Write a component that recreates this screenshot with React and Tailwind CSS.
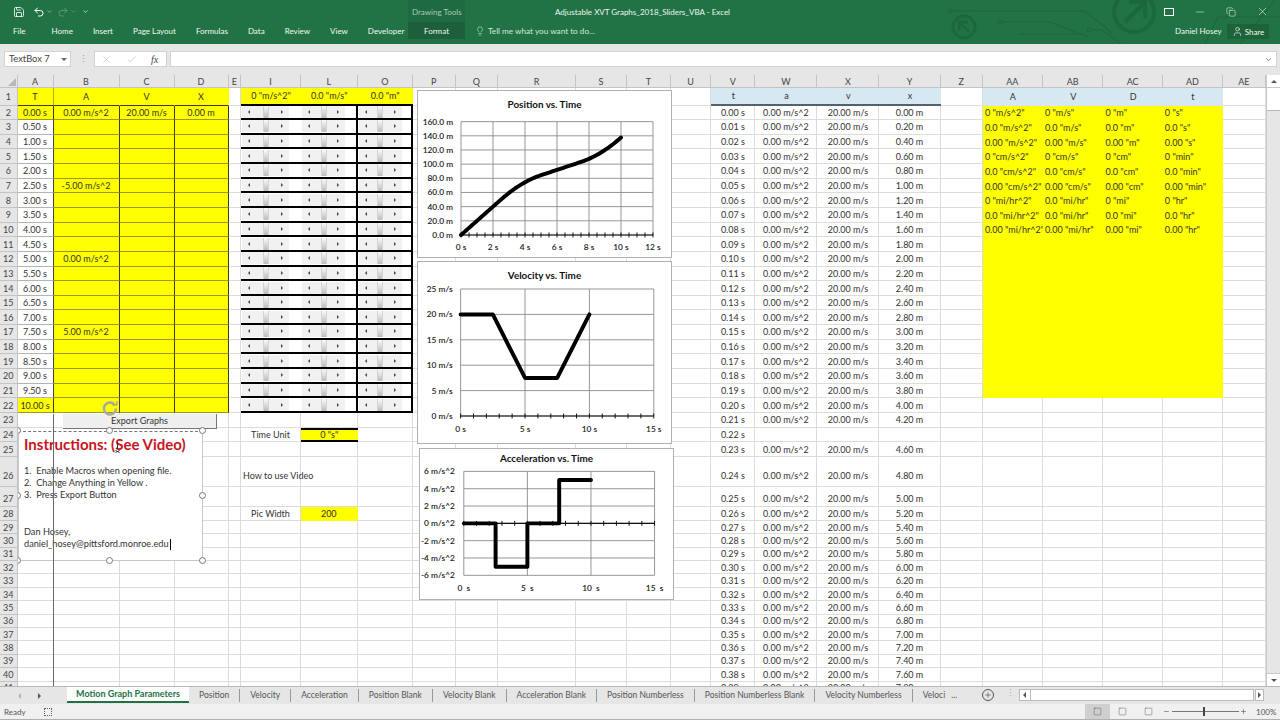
import { Save, Undo2, Redo2, Lightbulb, User, X, Check, ChevronDown, Plus, Minus, Square, Copy } from 'lucide-react';

const columns = ['A', 'B', 'C', 'D', 'E', 'I', 'L', 'O', 'P', 'Q', 'R', 'S', 'T', 'U', 'V', 'W', 'X', 'Y', 'Z', 'AA', 'AB', 'AC', 'AD', 'AE'];
const rows = Array.from({ length: 41 }, (_, i) => i + 1);

const unitTable = [
  ['0 "m/s^2"', '0 "m/s"', '0 "m"', '0 "s"'],
  ['0.0 "m/s^2"', '0.0 "m/s"', '0.0 "m"', '0.0 "s"'],
  ['0.00 "m/s^2"', '0.00 "m/s"', '0.00 "m"', '0.00 "s"'],
  ['0 "cm/s^2"', '0 "cm/s"', '0 "cm"', '0 "min"'],
  ['0.0 "cm/s^2"', '0.0 "cm/s"', '0.0 "cm"', '0.0 "min"'],
  ['0.00 "cm/s^2"', '0.00 "cm/s"', '0.00 "cm"', '0.00 "min"'],
  ['0 "mi/hr^2"', '0.0 "mi/hr"', '0 "mi"', '0 "hr"'],
  ['0.0 "mi/hr^2"', '0.0 "mi/hr"', '0.0 "mi"', '0.0 "hr"'],
  ['0.00 "mi/hr^2"', '0.00 "mi/hr"', '0.00 "mi"', '0.00 "hr"'],
];

const accel = { 2: '0.00 m/s^2', 7: '-5.00 m/s^2', 12: '0.00 m/s^2', 17: '5.00 m/s^2' };
const topLabels = { I: '0 "m/s^2"', L: '0.0 "m/s"', O: '0.0 "m"' };
const blueHeads = { V: 't', W: 'a', X: 'v', Y: 'x', AA: 'A', AB: 'V', AC: 'D', AD: 't' };

const plain = 'bg-white border-r border-b border-[#dcdcdc]';
const yellowHard = 'bg-[#ffff00] border-r border-b border-r-[#3c3c10] border-b-[#9a9a20]';

function Slider({ width }) {
  return (
    <div className={`flex h-[12px] items-center justify-between bg-[#f1f1f1] px-[6px] ${width}`}>
      <span className="h-0 w-0 border-y-[2.5px] border-r-[2.5px] border-y-transparent border-r-[#444]" />
      <span className="h-[12px] w-[6px] border-x border-[#d4d4d4] bg-linear-to-b from-[#fafafa] to-[#bdbdbd]" />
      <span className="h-0 w-0 border-y-[2.5px] border-l-[2.5px] border-y-transparent border-l-[#444]" />
    </div>
  );
}

function cellFor(col, row) {
  const inSliders = row >= 2 && row <= 22;

  if (col === 'A' || col === 'B' || col === 'C' || col === 'D') {
    if (row === 1) {
      const head = { A: 'T', B: 'A', C: 'V', D: 'X' }[col];
      const divider = col === 'A' ? 'border-r-[#b4b40c]' : 'border-r-[#ffff00]';
      return { text: head, cls: `bg-[#ffff00] border-r border-b border-b-[#3c3c10] ${divider}` };
    }
    if (row <= 22) {
      if (col === 'A') {
        const text = ((row - 2) * 0.5).toFixed(2) + ' s';
        if (row === 2 || row === 22) return { text, cls: yellowHard };
        return { text, cls: 'bg-white border-r border-b border-r-[#444] border-b-[#b4b4b4]' };
      }
      if (row === 2) return { text: col === 'B' ? accel[2] : col === 'C' ? '20.00 m/s' : '0.00 m', cls: yellowHard };
      return { text: col === 'B' ? accel[row] : '', cls: yellowHard };
    }
  }

  if (col === 'I' || col === 'L' || col === 'O') {
    if (row === 1) return { text: topLabels[col], cls: 'bg-[#ffff00] border-b-2 border-black' };
    if (inSliders) {
      const border = col === 'I' ? 'border-b-2 border-b-black' : 'border-b-2 border-r-2 border-black';
      const width = col === 'I' ? 'w-[47px]' : 'w-[43px]';
      return {
        node: <Slider width={width} />,
        cls: `bg-white justify-start pl-[1px] ${border}`,
      };
    }
  }

  if (col === 'I' && row === 24) return { text: 'Time Unit', cls: plain };
  if (col === 'L' && row === 24) return { text: '0 "s"', cls: 'bg-[#ffff00] border-y-2 border-black' };
  if (col === 'I' && row === 26) return { text: 'How to use Video', cls: `${plain} justify-start pl-[2px] overflow-visible z-[1]` };
  if (col === 'I' && row === 28) return { text: 'Pic Width', cls: plain };
  if (col === 'L' && row === 28) return { text: '200', cls: 'bg-[#ffff00] border-r border-b border-[#ffff00]' };

  if (blueHeads[col] && row === 1) {
    const under = col === 'V' || col === 'W' || col === 'X' || col === 'Y';
    return { text: blueHeads[col], cls: under ? 'bg-[#d6e8f1] border-b-2 border-[#55606a]' : 'bg-[#d6e8f1]' };
  }

  if ((col === 'V' || col === 'W' || col === 'X' || col === 'Y') && row >= 2) {
    const t = (row - 2) * 0.01;
    if (col === 'V') return { text: t.toFixed(2) + ' s', cls: plain };
    if (row === 24) return { text: '', cls: plain };
    if (col === 'W') return { text: '0.00 m/s^2', cls: plain };
    if (col === 'X') return { text: '20.00 m/s', cls: plain };
    return { text: (t * 20).toFixed(2) + ' m', cls: plain };
  }

  if ((col === 'AA' || col === 'AB' || col === 'AC' || col === 'AD') && row >= 2 && row <= 21) {
    const index = { AA: 0, AB: 1, AC: 2, AD: 3 }[col];
    const line = unitTable[row - 2];
    return { text: line ? line[index] : '', cls: 'bg-[#ffff00] justify-start pl-[2px]' };
  }

  return { text: '', cls: plain };
}

function Chart({ frame, box, plot, xs, ys, title, titleY, xLabelY, xLabel, yLabel, yLabelGap, axisY, points, tickEvery }) {
  const sx = (v) => plot.l + ((v - xs.min) / (xs.max - xs.min)) * (plot.r - plot.l);
  const sy = (v) => plot.b - ((v - ys.min) / (ys.max - ys.min)) * (plot.b - plot.t);
  const xMajor = [];
  for (let v = xs.min; v <= xs.max; v += xs.step) xMajor.push(v);
  const yMajor = [];
  for (let v = ys.min; v <= ys.max; v += ys.step) yMajor.push(v);
  const ticks = [];
  for (let v = xs.min; v <= xs.max; v += tickEvery) ticks.push(v);

  return (
    <div className={`absolute z-[2] border border-[#b0b0b0] bg-white ${frame}`}>
      <svg className="block h-full w-full" viewBox={`${box.x} ${box.y} ${box.w} ${box.h}`}>
        <text x={(box.x * 2 + box.w) / 2} y={titleY} textAnchor="middle" fontSize="10" fontWeight="700" fill="#111">
          {title}
        </text>
        {xMajor.map((v) => (
          <line key={`x${v}`} x1={sx(v)} x2={sx(v)} y1={plot.t} y2={plot.b} stroke="#8a8a8a" strokeWidth="0.9" />
        ))}
        {yMajor.map((v) => (
          <g key={`y${v}`}>
            <line x1={plot.l} x2={plot.r} y1={sy(v)} y2={sy(v)} stroke="#8a8a8a" strokeWidth="0.9" />
            <text x={plot.l - yLabelGap} y={sy(v) + 3} textAnchor="end" fontSize="8.5" fontWeight="600" fill="#222">
              {yLabel(v)}
            </text>
          </g>
        ))}
        <line x1={plot.l} x2={plot.r} y1={sy(axisY)} y2={sy(axisY)} stroke="#111" strokeWidth="1.1" />
        {ticks.map((v) => (
          <line key={`t${v}`} x1={sx(v)} x2={sx(v)} y1={sy(axisY) - 2.5} y2={sy(axisY) + 2.5} stroke="#111" strokeWidth="1" />
        ))}
        {xMajor.map((v) => (
          <text key={`l${v}`} x={sx(v)} y={xLabelY} textAnchor="middle" fontSize="8.5" fontWeight="600" fill="#222" xmlSpace="preserve">
            {xLabel(v)}
          </text>
        ))}
        <polyline
          points={points.map(([a, b]) => `${sx(a)},${sy(b)}`).join(' ')}
          fill="none"
          stroke="#000"
          strokeWidth="4"
          strokeLinejoin="round"
          strokeLinecap="round"
        />
      </svg>
    </div>
  );
}

function positionPoints() {
  const pts = [];
  let x = 0;
  let v = 20;
  for (let i = 0; i <= 100; i++) {
    const t = i * 0.1;
    pts.push([t, x]);
    const a = t < 2.5 ? 0 : t < 5 ? -5 : t < 7.5 ? 0 : 5;
    x += v * 0.1 + 0.5 * a * 0.01;
    v += a * 0.1;
  }
  return pts;
}

function Handle({ className }) {
  return <span className={`absolute z-[3] h-[7px] w-[7px] rounded-full border border-[#777] bg-white ${className}`} />;
}

function TitleBar() {
  return (
    <div className="relative h-[44px] shrink-0 bg-[#217346] text-white">
      <svg className="absolute inset-0 h-full w-full" viewBox="0 0 1280 44" fill="none" stroke="#1c673d" strokeWidth="1.2">
        <circle cx="950" cy="11" r="2" />
        <path d="M952 11H1085L1112 33" />
        <circle cx="1000" cy="22" r="2" />
        <path d="M1002 22H1050L1088 37" />
        <path d="M1020 34H1085" />
        <circle cx="1089" cy="30" r="2" />
        <path d="M1091 30H1102L1120 43" />
        <circle cx="964" cy="27" r="11" strokeWidth="3" />
        <path d="M969 32L959 22M959 31V22H968" strokeWidth="3" />
        <circle cx="1134" cy="12" r="20" strokeWidth="4" />
        <path d="M1125 22L1145 2M1129 2H1145V18" strokeWidth="4" />
        <path d="M1205 44L1218 17H1280M1240 44L1275 0" />
      </svg>

      <div className="absolute left-[408px] top-0 h-[22px] w-[57px] bg-[#1f6b41]" />
      <div className="absolute left-[408px] top-[22px] h-[17px] w-[57px] bg-[#1c5f3a]" />

      <div className="relative flex h-[22px] items-center pl-[13px] pt-[1px]">
        <Save size={12} strokeWidth={1.6} />
        <Undo2 size={12} strokeWidth={2} className="ml-[8px]" />
        <ChevronDown size={7} className="ml-[1px] opacity-70" />
        <Redo2 size={12} strokeWidth={1.5} className="ml-[4px] opacity-35" />
        <ChevronDown size={7} className="ml-[1px] opacity-35" />
        <ChevronDown size={7} className="ml-[5px]" />
        <span className="absolute left-[412px] text-[8px] text-[#a9c9b6]">Drawing Tools</span>
        <span className="absolute left-[555px] text-[8px] text-[#eef5f0]">Adjustable XVT Graphs_2018_Sliders_VBA - Excel</span>
        <div className="absolute right-[11px] flex items-center gap-[20px]">
          <span className="h-[8px] w-[10px] border border-white" />
          <Minus size={12} strokeWidth={1} />
          <Copy size={10} strokeWidth={1.2} />
          <X size={13} strokeWidth={1} />
        </div>
      </div>

      <div className="relative flex h-[18px] items-center text-[8px] text-[#f1f7f3]">
        <span className="ml-[13px]">File</span>
        <div className="ml-[26px] flex gap-[20px]">
          <span>Home</span>
          <span>Insert</span>
          <span>Page Layout</span>
          <span>Formulas</span>
          <span>Data</span>
          <span>Review</span>
          <span>View</span>
          <span>Developer</span>
        </div>
        <span className="absolute left-[424px]">Format</span>
        <span className="absolute left-[475px] flex items-center gap-[3px] text-[8.2px] text-[#d5e6db]">
          <Lightbulb size={10} strokeWidth={1.4} />
          Tell me what you want to do...
        </span>
        <span className="absolute left-[1175px]">Daniel Hosey</span>
        <span className="absolute left-[1227px] top-[2px] flex h-[15px] w-[42px] items-center justify-center gap-[2px] bg-[#1d6339]">
          <User size={11} strokeWidth={1.4} />
          Share
        </span>
      </div>
    </div>
  );
}

function FormulaBar() {
  return (
    <div className="flex h-[31px] shrink-0 items-start bg-[#e6e6e6] pt-[7px] text-[9.3px] text-[#444]">
      <div className="ml-[4px] flex h-[16px] w-[67px] items-center justify-between border border-[#d2d2d2] bg-white pl-[4px] pr-[3px]">
        TextBox 7
        <span className="h-0 w-0 border-x-[3px] border-t-[3px] border-x-transparent border-t-[#666]" />
      </div>
      <span className="ml-[8px] mt-[2px] text-[9px] leading-[12px] text-[#999]">⋮</span>
      <div className="ml-[6px] flex h-[16px] w-[73px] items-center gap-[14px] border border-[#d2d2d2] bg-white pl-[6px]">
        <X size={11} strokeWidth={1.2} className="text-[#b4b4b4]" />
        <Check size={11} strokeWidth={1.2} className="text-[#b4b4b4]" />
        <span className="font-['Liberation_Serif',serif] text-[10px] italic text-[#444]">fx</span>
      </div>
      <div className="ml-[3px] flex h-[16px] flex-1 items-center justify-end border border-[#d2d2d2] bg-white pr-[3px] mr-[3px]">
        <ChevronDown size={9} className="text-[#666]" />
      </div>
    </div>
  );
}

function Sheet() {
  return (
    <div className="relative h-[611px] shrink-0 overflow-hidden bg-white">
      <div className="grid grid-cols-[17.5px_36px_66px_55px_54px_12.5px_60px_56.5px_55.5px_42.5px_42.5px_78px_51px_43.6px_40.8px_44px_62px_62px_61.3px_42.2px_60px_60.6px_59.4px_60px_43.1px] grid-rows-[13px_17.5px_repeat(24,14.65px)_30px_20px_14px_repeat(13,13.4px)]">
        <div className="relative z-10 flex items-end justify-end border-r border-b border-[#c4c4c4] bg-[#e6e6e6] p-[1px]">
          <span className="h-0 w-0 border-b-[8px] border-l-[8px] border-b-[#b8b8b8] border-l-transparent" />
        </div>
        {columns.map((col) => (
          <div key={col} className="relative z-10 flex items-center justify-center border-r border-b border-[#c4c4c4] bg-[#e6e6e6] text-[9px] leading-none text-[#444]">
            {col}
          </div>
        ))}
        {rows.map((row) => (
          <div key={row} className="contents">
            <div
              className={`relative z-10 flex justify-center overflow-hidden border-r border-b border-[#c4c4c4] bg-[#e6e6e6] text-[9px] leading-none text-[#444] ${
                row === 27 ? 'items-end pb-[3px]' : row === 26 ? 'items-center pt-[8px]' : 'items-center'
              }`}
            >
              {row}
            </div>
            {columns.map((col) => {
              const cell = cellFor(col, row);
              const rowAlign = row === 27 ? 'items-end pb-[3px]' : row === 26 ? 'items-center pt-[8px]' : 'items-center';
              return (
                <div
                  key={col}
                  className={`relative flex justify-center whitespace-nowrap text-[9px] leading-none text-[#333] ${rowAlign} ${
                    cell.cls.includes('overflow-visible') ? '' : 'overflow-hidden'
                  } ${cell.cls}`}
                >
                  {cell.node || cell.text}
                </div>
              );
            })}
          </div>
        ))}
      </div>

      <Chart
        frame="left-[417px] top-[15px] h-[168px] w-[255px]"
        box={{ x: 417, y: 90, w: 255, h: 168 }}
        plot={{ l: 460, r: 654.3, t: 121, b: 235.7 }}
        xs={{ min: 0, max: 12, step: 2 }}
        ys={{ min: 0, max: 160, step: 20 }}
        title="Position vs. Time"
        titleY={107}
        xLabelY={251}
        xLabel={(v) => `${v} s`}
        yLabel={(v) => `${v.toFixed(1)} m`}
        yLabelGap={8}
        axisY={0}
        tickEvery={0.5}
        points={positionPoints()}
      />
      <Chart
        frame="left-[417px] top-[186px] h-[183px] w-[255px]"
        box={{ x: 417, y: 261, w: 255, h: 183 }}
        plot={{ l: 459.7, r: 655, t: 288.3, b: 416.7 }}
        xs={{ min: 0, max: 15, step: 5 }}
        ys={{ min: 0, max: 25, step: 5 }}
        title="Velocity vs. Time"
        titleY={278}
        xLabelY={433}
        xLabel={(v) => `${v} s`}
        yLabel={(v) => `${v} m/s`}
        yLabelGap={8}
        axisY={0}
        tickEvery={1}
        points={[[0, 20], [2.5, 20], [5, 7.5], [7.5, 7.5], [10, 20]]}
      />
      <Chart
        frame="left-[419px] top-[373px] h-[152px] w-[255px]"
        box={{ x: 419, y: 448, w: 255, h: 152 }}
        plot={{ l: 462.7, r: 656, t: 470.7, b: 576 }}
        xs={{ min: 0, max: 15, step: 5 }}
        ys={{ min: -6, max: 6, step: 2 }}
        title="Acceleration vs. Time"
        titleY={461}
        xLabelY={592}
        xLabel={(v) => `${v}  s`}
        yLabel={(v) => `${v} m/s^2`}
        yLabelGap={9}
        axisY={0}
        tickEvery={1}
        points={[[0, 0], [2.5, 0], [2.5, -5], [5, -5], [5, 0], [7.5, 0], [7.5, 5], [10, 5]]}
      />

      <button className="absolute left-[63px] top-[339px] z-[2] flex h-[15px] w-[154px] items-center justify-center border-r border-b border-[#777] bg-[#efefef] text-[9px] text-[#333]">
        Export Graphs
      </button>

      <div className="absolute left-[18px] top-[356px] z-[2] h-[130px] w-[185px] border border-[#c8c8c8] border-t-[#777] bg-white pl-[5px] text-[#333] [border-top-style:dashed]">
        <h3 className="mt-[3px] text-[15px] font-bold leading-[18px] text-[#c8141e]">Instructions: (See Video)</h3>
        <ol className="mt-[12px] text-[9.2px] leading-[12px]">
          <li>1.&nbsp; Enable Macros when opening file.</li>
          <li>2.&nbsp; Change Anything in Yellow .</li>
          <li>3.&nbsp; Press Export Button</li>
        </ol>
        <p className="mt-[25px] text-[9.2px] leading-[12px]">Dan Hosey,</p>
        <p className="text-[9.2px] leading-[12px]">
          daniel_hosey@pittsford.monroe.edu<span className="ml-[1px] inline-block h-[11px] w-px bg-black align-middle" />
        </p>
      </div>

      <Handle className="left-[14px] top-[352px]" />
      <Handle className="left-[106px] top-[352px]" />
      <Handle className="left-[199px] top-[352px]" />
      <Handle className="left-[14px] top-[417px]" />
      <Handle className="left-[199px] top-[417px]" />
      <Handle className="left-[14px] top-[482px]" />
      <Handle className="left-[106px] top-[482px]" />
      <Handle className="left-[199px] top-[482px]" />

      <svg className="absolute left-[102px] top-[325px] z-[3]" width="16" height="16" viewBox="0 0 16 16" fill="none">
        <path d="M12.5 4.5A6 6 0 1 0 14 8.5" stroke="#a8a8a8" strokeWidth="2.4" />
        <path d="M10.5 5H15V1" stroke="#8c8c8c" strokeWidth="1" />
      </svg>

      <svg className="absolute left-[113px] top-[367px] z-[3]" width="9" height="11" viewBox="0 0 9 11" fill="none" stroke="#333" strokeWidth="1">
        <path d="M4.5 0V7M2.5 8.5L6.5 10.5M6.5 8.5L2.5 10.5" />
      </svg>

      <div className="absolute bottom-0 left-[53px] top-[339px] z-[3] w-px bg-[#6a6a6a]" />

      <div className="absolute bottom-0 right-0 top-0 z-[4] flex w-[14px] flex-col border-l border-[#c8c8c8] bg-[#e6e6e6]">
        <div className="flex h-[13px] items-center justify-center border-b border-[#c8c8c8] bg-white">
          <span className="h-0 w-0 border-x-[3px] border-b-[3px] border-x-transparent border-b-[#555]" />
        </div>
        <div className="h-[23px] border-b border-[#b8b8b8] bg-white" />
        <div className="flex-1" />
        <div className="flex h-[13px] items-center justify-center border-t border-[#c8c8c8] bg-white">
          <span className="h-0 w-0 border-x-[3px] border-t-[3px] border-x-transparent border-t-[#555]" />
        </div>
      </div>
    </div>
  );
}

function TabBar() {
  const tabs = ['Position', 'Velocity', 'Acceleration', 'Position Blank', 'Velocity Blank', 'Acceleration Blank', 'Position Numberless', 'Position Numberless Blank', 'Velocity Numberless'];
  return (
    <div className="relative flex h-[18px] shrink-0 items-start overflow-hidden border-t border-[#b8b8b8] bg-[#e6e6e6] text-[8.5px] text-[#555]">
      <span className="ml-[18px] mt-[6px] h-0 w-0 border-y-[3px] border-r-[3px] border-y-transparent border-r-[#b5b5b5]" />
      <span className="ml-[17px] mt-[6px] h-0 w-0 border-y-[3px] border-l-[3px] border-y-transparent border-l-[#555]" />
      <div className="ml-[26px] flex h-[16px] w-[122px] items-center justify-center border-b-2 border-[#217346] bg-white text-[9px] font-bold text-[#217346]">
        Motion Graph Parameters
      </div>
      <div className="flex h-[16px] items-center">
        {tabs.map((name) => (
          <span key={name} className="flex h-[13px] items-center border-r border-[#999] px-[10px]">
            {name}
          </span>
        ))}
        <span className="pl-[10px]">Veloci</span>
        <span className="ml-[6px]">...</span>
      </div>
      <span className="absolute left-[982px] top-[2px] flex h-[12px] w-[12px] items-center justify-center rounded-full border border-[#555]">
        <Plus size={8} />
      </span>
      <span className="absolute left-[1006px] top-0 text-[#aaa]">⋮</span>
      <div className="absolute left-[1019px] top-[2px] flex h-[12px] w-[235px] items-center border border-[#bbb] bg-white">
        <span className="ml-[3px] h-0 w-0 border-y-[3px] border-r-[3px] border-y-transparent border-r-[#555]" />
        <span className="ml-[4px] h-full border-l border-[#bbb]" />
      </div>
      <div className="absolute left-[1255px] top-[2px] flex h-[12px] w-[9px] items-center justify-center border border-[#bbb] bg-white">
        <span className="h-0 w-0 border-y-[3px] border-l-[3px] border-y-transparent border-l-[#555]" />
      </div>
    </div>
  );
}

function StatusBar() {
  return (
    <div className="relative flex h-[16px] shrink-0 items-center border-b border-[#b0b0b0] bg-[#f0f0f0] text-[8px] text-[#555]">
      <span className="ml-[4px]">Ready</span>
      <span className="ml-[18px] h-[8px] w-[8px] border border-dotted border-[#666]" />
      <div className="absolute left-[1085px] top-0 flex h-[15px] w-[25px] items-center justify-center bg-[#cfcfcf]">
        <Square size={9} strokeWidth={1.2} />
      </div>
      <Square size={9} strokeWidth={1.2} className="absolute left-[1118px] top-[3px]" />
      <Square size={9} strokeWidth={1.2} className="absolute left-[1144px] top-[3px]" />
      <Minus size={7} className="absolute left-[1163px] top-[4px]" />
      <div className="absolute left-[1172px] top-[7px] h-px w-[67px] bg-[#777]" />
      <div className="absolute left-[1203px] top-[3px] h-[9px] w-[2px] bg-[#444]" />
      <Plus size={7} className="absolute left-[1240px] top-[4px]" />
      <span className="absolute left-[1256px]">100%</span>
    </div>
  );
}

export default function App() {
  return (
    <div className="flex h-[720px] w-[1280px] flex-col overflow-hidden bg-white font-['Lato','Liberation_Sans',sans-serif]">
      <TitleBar />
      <FormulaBar />
      <Sheet />
      <TabBar />
      <StatusBar />
    </div>
  );
}
